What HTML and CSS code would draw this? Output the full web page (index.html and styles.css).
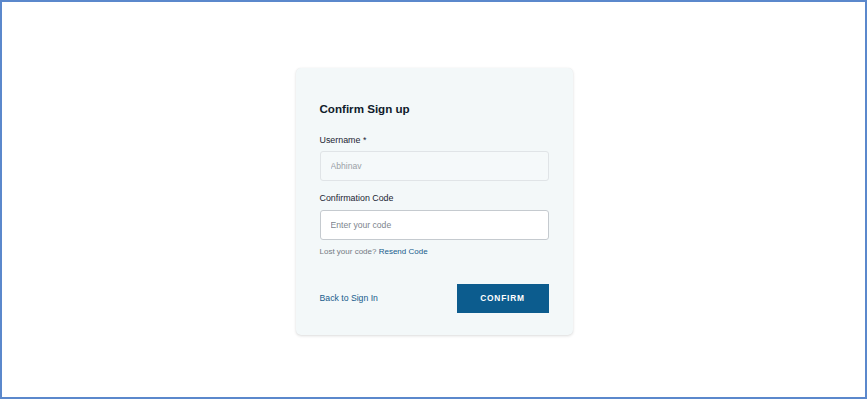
FILE: index.html
```html
<!DOCTYPE html>
<html lang="en">
<head>
<meta charset="utf-8">
<title>Confirm Sign up</title>
<link rel="stylesheet" href="styles.css">
</head>
<body>
<div class="frame">
  <form class="card">
    <h1 class="title">Confirm Sign up</h1>
    <label class="label" for="username">Username *</label>
    <input class="input input-disabled" id="username" type="text" placeholder="Abhinav" disabled>
    <label class="label label-second" for="code">Confirmation Code</label>
    <input class="input" id="code" type="text" placeholder="Enter your code">
    <p class="hint">Lost your code? <a class="link" href="#">Resend Code</a></p>
    <div class="footer">
      <a class="link back" href="#">Back to Sign In</a>
      <button class="button" type="button">CONFIRM</button>
    </div>
  </form>
</div>
</body>
</html>
```

FILE: styles.css
```css
* { box-sizing: border-box; }
html, body { margin: 0; padding: 0; background: #ffffff; }
body { font-family: "Liberation Sans", Arial, sans-serif; }

.frame {
  width: 867px;
  height: 399px;
  border: 2px solid #5b88cc;
  display: flex;
  align-items: center;
  justify-content: center;
  padding: 3px 0 0 1px;
}

.card {
  width: 277px;
  height: 267px;
  background: #f3f8f9;
  border-radius: 5px;
  box-shadow: 0 1px 3px rgba(0, 0, 0, 0.14), 0 0 1px rgba(0, 0, 0, 0.06);
  padding: 34px 24px 22px 24px;
  display: flex;
  flex-direction: column;
}

.title {
  margin: 0 0 18px 0;
  font-size: 11.6px;
  line-height: 14px;
  font-weight: 700;
  color: #0f1b2b;
}

.label {
  display: block;
  font-size: 8.9px;
  line-height: 12px;
  color: #1b2533;
  margin-bottom: 5px;
}
.label-second { margin-top: 11px; margin-bottom: 6px; }

.input {
  display: block;
  width: 229px;
  height: 30px;
  border: 1px solid #c5cacf;
  border-radius: 3px;
  background: #ffffff;
  padding: 0 10px;
  font-family: "Liberation Sans", Arial, sans-serif;
  font-size: 8.6px;
  color: #1b2533;
  outline: none;
}
.input::placeholder { color: #7d858d; }
.input-disabled {
  background: #f5f9fa;
  border-color: #e0e4e7;
}
.input-disabled::placeholder { color: #9aa1a7; }

.hint {
  margin: 6px 0 0 0;
  font-size: 8px;
  line-height: 11px;
  color: #737b83;
}

.link {
  color: #185c8c;
  text-decoration: none;
}

.footer {
  margin-top: 27px;
  display: flex;
  align-items: center;
  justify-content: space-between;
}

.back {
  font-size: 8.7px;
  line-height: 12px;
}

.button {
  width: 92px;
  height: 29px;
  border: none;
  border-radius: 0;
  background: #0c5c8e;
  color: #ffffff;
  font-family: "Liberation Sans", Arial, sans-serif;
  font-size: 8.4px;
  font-weight: 700;
  letter-spacing: 0.8px;
  padding: 0;
}
```
